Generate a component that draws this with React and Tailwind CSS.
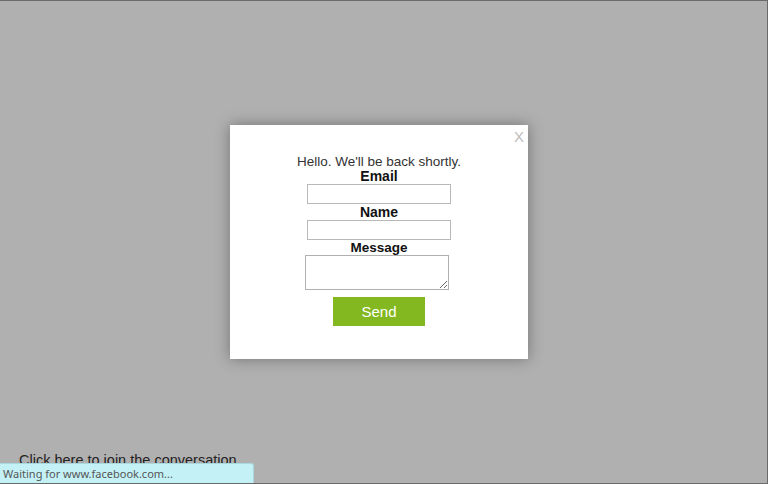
export default function App() {
  return (
    <div
      className="relative h-[484px] w-full overflow-hidden border-t border-r border-b border-[#6b6b6b] bg-[#b0b0b0] flex flex-col justify-end"
      style={{ fontFamily: '"Liberation Sans", Arial, sans-serif' }}
    >
      <div className="pl-[19px] pb-[14px] text-[14.5px] leading-[17px] text-[#222]">
        Click here to join the conversation
      </div>

      {/* modal */}
      <div className="absolute left-[230px] top-[124px] w-[298px] h-[234px] bg-white shadow-[0_0_14px_rgba(0,0,0,0.35)] flex flex-col items-center pt-[29px]">
        <span className="absolute right-[4px] top-[3px] text-[15px] leading-[17px] text-[#bdbdbd]">X</span>
        <div className="text-[13.5px] leading-[15px] text-[#333]">Hello. We'll be back shortly.</div>
        <div className="text-[14px] leading-[15px] font-bold text-[#111]">Email</div>
        <input className="w-[144px] h-[20px] border border-[#b8b8b8] bg-white outline-none" />
        <div className="text-[14px] leading-[16px] font-bold text-[#111]">Name</div>
        <input className="w-[144px] h-[20px] border border-[#b8b8b8] bg-white outline-none" />
        <div className="text-[13.5px] leading-[15px] font-bold text-[#111]">Message</div>
        <textarea className="w-[144px] h-[35px] mr-[4px] border border-[#b0b0b0] bg-white outline-none block" />
        <button className="mt-[7px] w-[92px] h-[29px] bg-[#84b820] text-white text-[15px] leading-[17px]">
          Send
        </button>
      </div>

      {/* status bar */}
      <div
        className="absolute left-0 bottom-[-1px] w-[254px] h-[21px] bg-[#c4f1f5] border-t border-r border-[#a9d9de] rounded-tr-[3px] pl-[3px] text-[11px] leading-[20px] text-[#555]"
        style={{ fontFamily: '"Noto Sans", "Open Sans", sans-serif' }}
      >
        Waiting for www.facebook.com...
      </div>
    </div>
  );
}
